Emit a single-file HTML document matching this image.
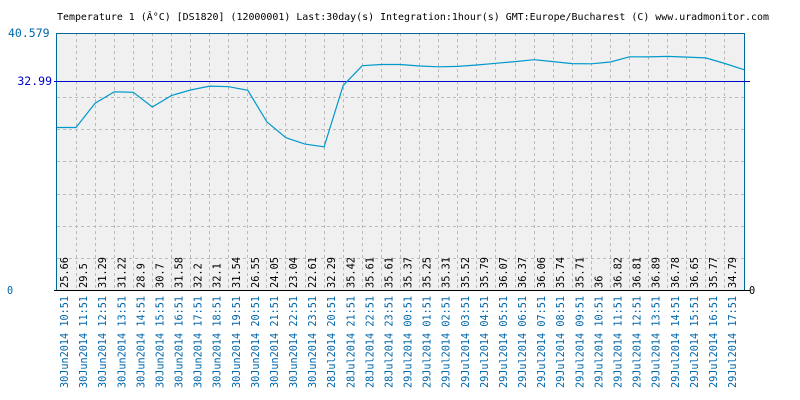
<!DOCTYPE html>
<html><head><meta charset="utf-8"><style>
body{margin:0;background:#fff;width:800px;height:400px;overflow:hidden}
svg{display:block;font-family:"DejaVu Sans Mono","Liberation Mono",monospace}
.v{font-size:10.3px;fill:#000}
.d{font-size:10.2px;fill:#0066aa}
</style></head><body>
<svg width="800" height="400" viewBox="0 0 800 400">
<rect x="56" y="33" width="688" height="257" fill="#f0f0f0"/>
<g stroke="#bbb" stroke-dasharray="3,3" stroke-width="1">
<path d="M57 97.5H744M57 129.5H744M57 161.5H744M57 194.5H744M57 226.5H744M57 258.5H744"/>
<path d="M76.5 33V290M95.5 33V290M114.5 33V290M133.5 33V290M152.5 33V290M171.5 33V290M190.5 33V290M209.5 33V290M228.5 33V290M247.5 33V290M266.5 33V290M285.5 33V290M305.5 33V290M324.5 33V290M343.5 33V290M362.5 33V290M381.5 33V290M400.5 33V290M419.5 33V290M438.5 33V290M457.5 33V290M476.5 33V290M495.5 33V290M515.5 33V290M534.5 33V290M553.5 33V290M572.5 33V290M591.5 33V290M610.5 33V290M629.5 33V290M648.5 33V290M667.5 33V290M686.5 33V290M705.5 33V290M724.5 33V290"/>
</g>
<rect x="56.5" y="33.5" width="688" height="257" fill="none" stroke="#006699"/>
<line x1="54" y1="290.5" x2="750" y2="290.5" stroke="#000"/>
<line x1="54" y1="81.5" x2="750" y2="81.5" stroke="#0000cc"/>
<polyline fill="none" stroke="#0099cc" stroke-width="1.2" points="57,127.5 76,127.5 95.1,103.2 114.2,91.8 133.3,92.3 152.3,107 171.4,95.6 190.5,90 209.6,86.1 228.7,86.7 247.8,90.3 266.9,121.9 285.9,137.7 305,144.1 324.1,146.8 343.2,85.5 362.3,65.7 381.4,64.5 400.5,64.5 419.5,66 438.6,66.8 457.7,66.4 476.8,65 495.9,63.3 515,61.6 534.1,59.7 553.2,61.6 572.2,63.6 591.3,63.8 610.4,62 629.5,56.8 648.6,56.9 667.7,56.4 686.8,57.1 705.8,57.9 724.9,63.5 744,69.7"/>
<text x="57" y="20" style="font-size:9.95px" fill="#000">Temperature 1 (Â°C) [DS1820] (12000001) Last:30day(s) Integration:1hour(s) GMT:Europe/Bucharest (C) www.uradmonitor.com</text>
<text x="8" y="37" class="d" style="font-size:11.5px">40.579</text>
<text x="52" y="85" text-anchor="end" style="font-size:11.5px" fill="#0000cc">32.99</text>
<text x="7" y="294" class="d">0</text>
<text x="749" y="294" class="v">0</text>
<g class="v" text-anchor="start">
<text transform="translate(68,288) rotate(-90)">25.66</text>
<text transform="translate(87.1,288) rotate(-90)">29.5</text>
<text transform="translate(106.2,288) rotate(-90)">31.29</text>
<text transform="translate(125.3,288) rotate(-90)">31.22</text>
<text transform="translate(144.3,288) rotate(-90)">28.9</text>
<text transform="translate(163.4,288) rotate(-90)">30.7</text>
<text transform="translate(182.5,288) rotate(-90)">31.58</text>
<text transform="translate(201.6,288) rotate(-90)">32.2</text>
<text transform="translate(220.7,288) rotate(-90)">32.1</text>
<text transform="translate(239.8,288) rotate(-90)">31.54</text>
<text transform="translate(258.9,288) rotate(-90)">26.55</text>
<text transform="translate(277.9,288) rotate(-90)">24.05</text>
<text transform="translate(297,288) rotate(-90)">23.04</text>
<text transform="translate(316.1,288) rotate(-90)">22.61</text>
<text transform="translate(335.2,288) rotate(-90)">32.29</text>
<text transform="translate(354.3,288) rotate(-90)">35.42</text>
<text transform="translate(373.4,288) rotate(-90)">35.61</text>
<text transform="translate(392.5,288) rotate(-90)">35.61</text>
<text transform="translate(411.5,288) rotate(-90)">35.37</text>
<text transform="translate(430.6,288) rotate(-90)">35.25</text>
<text transform="translate(449.7,288) rotate(-90)">35.31</text>
<text transform="translate(468.8,288) rotate(-90)">35.52</text>
<text transform="translate(487.9,288) rotate(-90)">35.79</text>
<text transform="translate(507,288) rotate(-90)">36.07</text>
<text transform="translate(526.1,288) rotate(-90)">36.37</text>
<text transform="translate(545.2,288) rotate(-90)">36.06</text>
<text transform="translate(564.2,288) rotate(-90)">35.74</text>
<text transform="translate(583.3,288) rotate(-90)">35.71</text>
<text transform="translate(602.4,288) rotate(-90)">36</text>
<text transform="translate(621.5,288) rotate(-90)">36.82</text>
<text transform="translate(640.6,288) rotate(-90)">36.81</text>
<text transform="translate(659.7,288) rotate(-90)">36.89</text>
<text transform="translate(678.8,288) rotate(-90)">36.78</text>
<text transform="translate(697.8,288) rotate(-90)">36.65</text>
<text transform="translate(716.9,288) rotate(-90)">35.77</text>
<text transform="translate(736,288) rotate(-90)">34.79</text>
</g>
<g class="d" text-anchor="end">
<text transform="translate(68,296) rotate(-90)">30Jun2014 10:51</text>
<text transform="translate(87.1,296) rotate(-90)">30Jun2014 11:51</text>
<text transform="translate(106.2,296) rotate(-90)">30Jun2014 12:51</text>
<text transform="translate(125.3,296) rotate(-90)">30Jun2014 13:51</text>
<text transform="translate(144.3,296) rotate(-90)">30Jun2014 14:51</text>
<text transform="translate(163.4,296) rotate(-90)">30Jun2014 15:51</text>
<text transform="translate(182.5,296) rotate(-90)">30Jun2014 16:51</text>
<text transform="translate(201.6,296) rotate(-90)">30Jun2014 17:51</text>
<text transform="translate(220.7,296) rotate(-90)">30Jun2014 18:51</text>
<text transform="translate(239.8,296) rotate(-90)">30Jun2014 19:51</text>
<text transform="translate(258.9,296) rotate(-90)">30Jun2014 20:51</text>
<text transform="translate(277.9,296) rotate(-90)">30Jun2014 21:51</text>
<text transform="translate(297,296) rotate(-90)">30Jun2014 22:51</text>
<text transform="translate(316.1,296) rotate(-90)">30Jun2014 23:51</text>
<text transform="translate(335.2,296) rotate(-90)">28Jul2014 20:51</text>
<text transform="translate(354.3,296) rotate(-90)">28Jul2014 21:51</text>
<text transform="translate(373.4,296) rotate(-90)">28Jul2014 22:51</text>
<text transform="translate(392.5,296) rotate(-90)">28Jul2014 23:51</text>
<text transform="translate(411.5,296) rotate(-90)">29Jul2014 00:51</text>
<text transform="translate(430.6,296) rotate(-90)">29Jul2014 01:51</text>
<text transform="translate(449.7,296) rotate(-90)">29Jul2014 02:51</text>
<text transform="translate(468.8,296) rotate(-90)">29Jul2014 03:51</text>
<text transform="translate(487.9,296) rotate(-90)">29Jul2014 04:51</text>
<text transform="translate(507,296) rotate(-90)">29Jul2014 05:51</text>
<text transform="translate(526.1,296) rotate(-90)">29Jul2014 06:51</text>
<text transform="translate(545.2,296) rotate(-90)">29Jul2014 07:51</text>
<text transform="translate(564.2,296) rotate(-90)">29Jul2014 08:51</text>
<text transform="translate(583.3,296) rotate(-90)">29Jul2014 09:51</text>
<text transform="translate(602.4,296) rotate(-90)">29Jul2014 10:51</text>
<text transform="translate(621.5,296) rotate(-90)">29Jul2014 11:51</text>
<text transform="translate(640.6,296) rotate(-90)">29Jul2014 12:51</text>
<text transform="translate(659.7,296) rotate(-90)">29Jul2014 13:51</text>
<text transform="translate(678.8,296) rotate(-90)">29Jul2014 14:51</text>
<text transform="translate(697.8,296) rotate(-90)">29Jul2014 15:51</text>
<text transform="translate(716.9,296) rotate(-90)">29Jul2014 16:51</text>
<text transform="translate(736,296) rotate(-90)">29Jul2014 17:51</text>
</g>
</svg>
</body></html>
